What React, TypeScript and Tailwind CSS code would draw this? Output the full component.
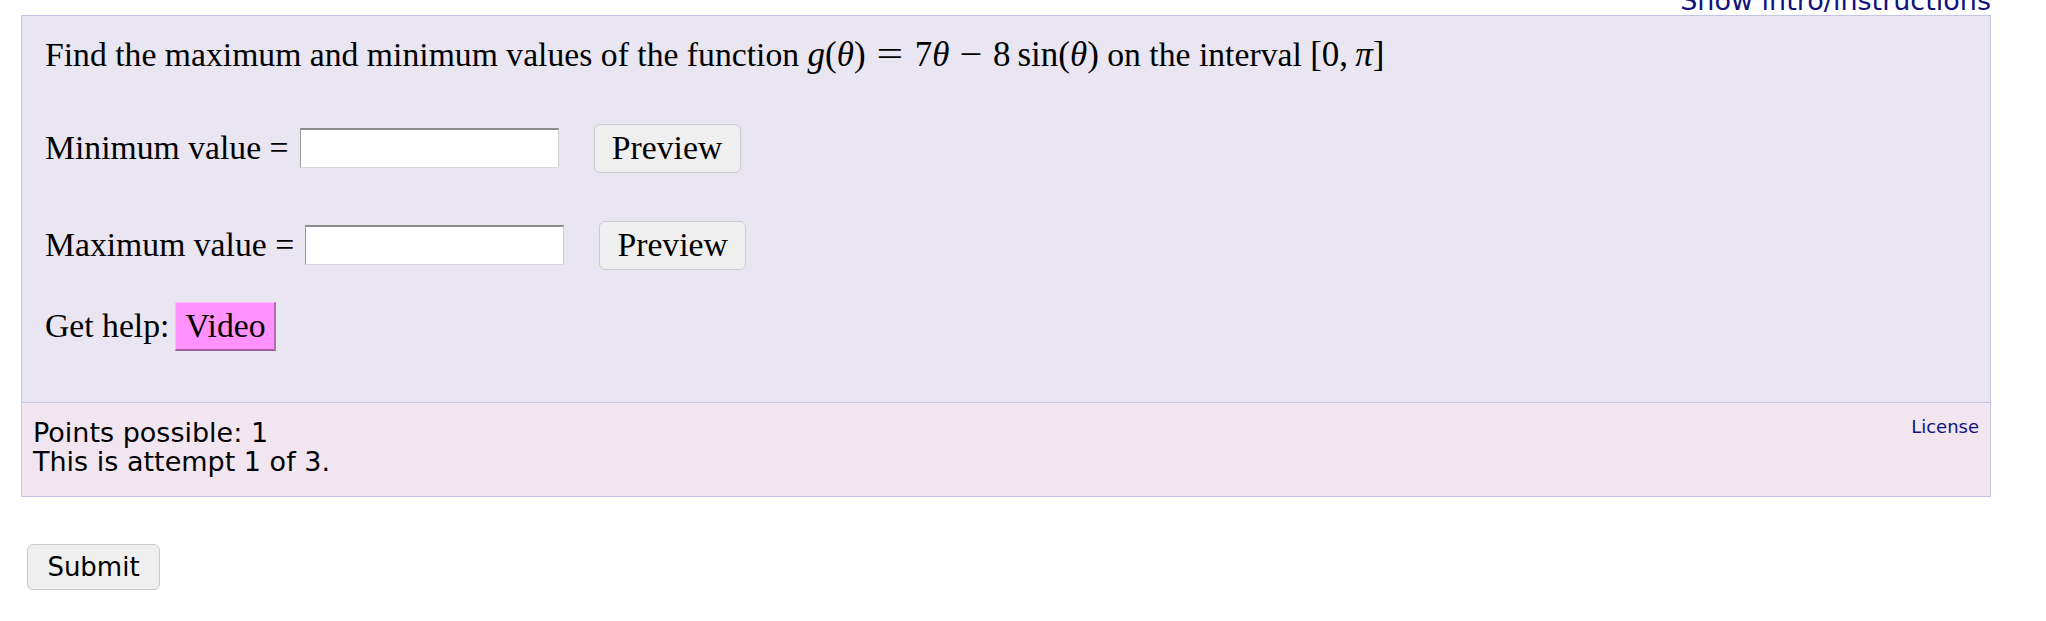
const serif = "font-['Liberation_Serif',serif]";
const sans = "font-['DejaVu_Sans',sans-serif]";

function AnswerRow({ label }: { label: string }) {
  return (
    <div className="flex h-[50px] items-center">
      <span className="leading-[38px] whitespace-nowrap">{label}</span>
      <input
        type="text"
        className="ml-[11px] h-[40px] w-[259px] border border-t-2 border-t-[#8c8c8c] border-l-[#9a9a9a] border-r-[#cfcfcf] border-b-[#d9d9d9] bg-white outline-none"
      />
      <button className="ml-[35px] h-[49px] w-[147px] rounded-[6px] border border-[#cdcdcd] bg-[#efefef] leading-[38px] text-black">
        Preview
      </button>
    </div>
  );
}

function Theta() {
  return <i>θ</i>;
}

export default function App() {
  return (
    <div className="h-[621px] w-full overflow-hidden bg-white">
      <div className={`${sans} -mt-[14px] w-[1991px] text-right text-[27px] leading-[29px] text-[#12127f]`}>
        <a href="#">Show intro/instructions</a>
      </div>

      <div className="ml-[21px] w-[1970px] border border-[#c4c4e6]">
        <div className={`${serif} bg-[#e9e6f2] pt-[20px] pb-[51px] pl-[23px] text-[33.7px] text-black`}>
          <div className="h-[38px] leading-[38px] whitespace-nowrap">
            Find the maximum and minimum values of the function{" "}
            <span className="text-[35px]">
              <i>g</i>(<Theta />)
              <span className="mx-[0.42em] inline-block scale-x-[1.35]">=</span>7<Theta />
              <span className="mx-[0.34em] inline-block scale-x-[1.15]">−</span>8
              <span className="ml-[0.2em]">sin</span>(<Theta />)
            </span>{" "}
            on the interval{" "}
            <span className="text-[35px]">
              [0,<span className="inline-block w-[0.2em]" />
              <i>π</i>]
            </span>
          </div>

          <div className="mt-[49px]">
            <AnswerRow label="Minimum value =" />
          </div>
          <div className="mt-[47px]">
            <AnswerRow label="Maximum value =" />
          </div>

          <div className="mt-[31px] flex h-[50px] items-center">
            <span className="leading-[38px]">Get help:</span>
            <button className="ml-[6px] h-[49px] w-[101px] border border-t-[#ffb8ff] border-l-[#ffb8ff] border-r-[#b070b0] border-b-[#a060a0] border-r-2 border-b-2 bg-[#ff92ff] leading-[38px] text-black">
              Video
            </button>
          </div>
        </div>

        <div className={`${sans} flex items-start justify-between border-t border-[#c4c4e6] bg-[#f1e6f0] pt-[15px] pr-[11px] pb-[20px] pl-[11px] text-black`}>
          <div className="text-[27px] leading-[29px]">
            <div>Points possible: 1</div>
            <div>This is attempt 1 of 3.</div>
          </div>
          <a href="#" className="-mt-[2px] text-[18px] leading-[21px] text-[#12127f]">
            License
          </a>
        </div>
      </div>

      <button
        className={`${sans} mt-[47px] ml-[27px] h-[46px] w-[133px] rounded-[6px] border border-[#cbcbcb] bg-[#efefef] text-[26px] text-black`}
      >
        Submit
      </button>
    </div>
  );
}
